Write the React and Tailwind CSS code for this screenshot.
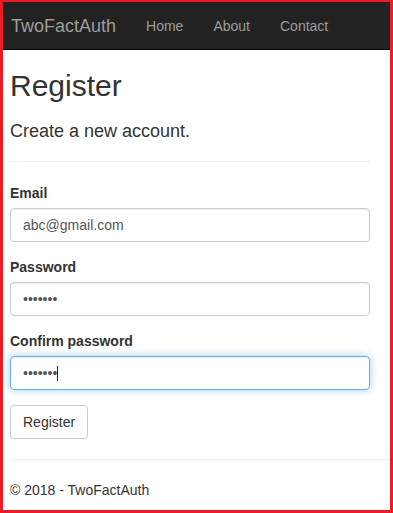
import React from 'react';

const NavLink = ({ children }) => (
  <a href="#" className="px-[15px] text-[14px] leading-[20px] text-[#9d9d9d] no-underline">
    {children}
  </a>
);

const Field = ({ label, children }) => (
  <div className="mb-[15px]">
    <label className="block mb-[5px] text-[14px] leading-[20px] font-bold text-[#333]">{label}</label>
    {children}
  </div>
);

const App = () => {
  return (
    <div className="w-[393px] h-[513px] overflow-hidden bg-white border-[#ed1c24] border-l-[3px] border-r-[3px] border-t-[2px] border-b-[3px] font-['Liberation_Sans',Arial,sans-serif]">
      {/* Navbar */}
      <nav className="h-[48px] bg-[#222] border-b border-[#080808] flex items-center">
        <a href="#" className="pl-[8px] pr-[15px] text-[18px] leading-[20px] text-[#9d9d9d] no-underline">
          TwoFactAuth
        </a>
        <NavLink>Home</NavLink>
        <NavLink>About</NavLink>
        <NavLink>Contact</NavLink>
      </nav>

      <div className="pl-[7px]">
        <h2 className="mt-[19px] text-[30px] leading-[33px] text-[#333]">Register</h2>
        <h4 className="mt-[19px] text-[18px] leading-[20px] text-[#333]">Create a new account.</h4>
        <hr className="mt-[20px] w-[360px] border-0 border-t border-[#eee]" />

        <form className="mt-[21px]" onSubmit={(e) => e.preventDefault()}>
          <Field label="Email">
            <div className="w-[360px] h-[34px] px-[12px] flex items-center border border-[#ccc] rounded-[4px] shadow-[inset_0_1px_1px_rgba(0,0,0,0.075)] text-[14px] text-[#555]">
              abc@gmail.com
            </div>
          </Field>
          <Field label="Password">
            <div className="w-[360px] h-[34px] px-[12px] flex items-center border border-[#ccc] rounded-[4px] shadow-[inset_0_1px_1px_rgba(0,0,0,0.075)] text-[14px] text-[#555]">
              •••••••
            </div>
          </Field>
          <Field label="Confirm password">
            <div className="w-[360px] h-[34px] px-[12px] flex items-center border border-[#66afe9] rounded-[4px] shadow-[inset_0_1px_1px_rgba(0,0,0,0.075),0_0_8px_rgba(102,175,233,0.6)] text-[14px] text-[#555]">
              •••••••
              <span className="w-px h-[15px] bg-[#222]" />
            </div>
          </Field>
          <button
            type="submit"
            className="h-[34px] px-[12px] border border-[#ccc] rounded-[4px] bg-white text-[14px] text-[#333]"
          >
            Register
          </button>
        </form>

        <hr className="mt-[20px] border-0 border-t border-[#eee]" />
        <footer>
          <p className="mt-[20px] text-[14px] leading-[20px] text-[#333]">© 2018 - TwoFactAuth</p>
        </footer>
      </div>
    </div>
  );
};

export default App;
